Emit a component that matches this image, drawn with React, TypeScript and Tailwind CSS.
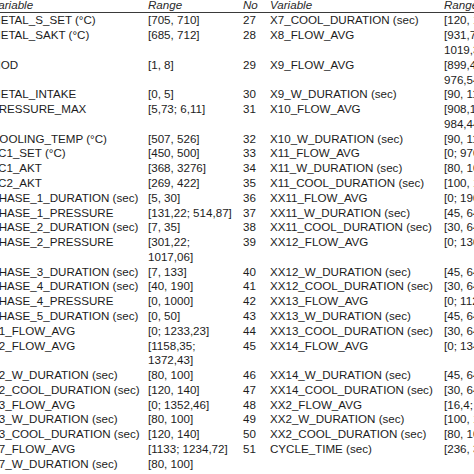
import React from "react";

type Row = { lv: string; lr: string[]; no?: string; rv?: string; rr?: string[] };

const rows: Row[] = [
  { lv: "METAL_S_SET (°C)", lr: ["[705, 710]"], no: "27", rv: "X7_COOL_DURATION (sec)", rr: ["[120, 140]"] },
  { lv: "METAL_SAKT (°C)", lr: ["[685, 712]"], no: "28", rv: "X8_FLOW_AVG", rr: ["[931,72;", "1019,35]"] },
  { lv: "MOD", lr: ["[1, 8]"], no: "29", rv: "X9_FLOW_AVG", rr: ["[899,45;", "976,54]"] },
  { lv: "METAL_INTAKE", lr: ["[0, 5]"], no: "30", rv: "X9_W_DURATION (sec)", rr: ["[90, 110]"] },
  { lv: "PRESSURE_MAX", lr: ["[5,73; 6,11]"], no: "31", rv: "X10_FLOW_AVG", rr: ["[908,15;", "984,44]"] },
  { lv: "COOLING_TEMP (°C)", lr: ["[507, 526]"], no: "32", rv: "X10_W_DURATION (sec)", rr: ["[90, 110]"] },
  { lv: "TC1_SET (°C)", lr: ["[450, 500]"], no: "33", rv: "X11_FLOW_AVG", rr: ["[0; 970,12]"] },
  { lv: "TC1_AKT", lr: ["[368, 3276]"], no: "34", rv: "X11_W_DURATION (sec)", rr: ["[80, 100]"] },
  { lv: "TC2_AKT", lr: ["[269, 422]"], no: "35", rv: "X11_COOL_DURATION (sec)", rr: ["[100, 120]"] },
  { lv: "PHASE_1_DURATION (sec)", lr: ["[5, 30]"], no: "36", rv: "XX11_FLOW_AVG", rr: ["[0; 190,45]"] },
  { lv: "PHASE_1_PRESSURE", lr: ["[131,22; 514,87]"], no: "37", rv: "XX11_W_DURATION (sec)", rr: ["[45, 64]"] },
  { lv: "PHASE_2_DURATION (sec)", lr: ["[7, 35]"], no: "38", rv: "XX11_COOL_DURATION (sec)", rr: ["[30, 64]"] },
  { lv: "PHASE_2_PRESSURE", lr: ["[301,22;", "1017,06]"], no: "39", rv: "XX12_FLOW_AVG", rr: ["[0; 130,21]"] },
  { lv: "PHASE_3_DURATION (sec)", lr: ["[7, 133]"], no: "40", rv: "XX12_W_DURATION (sec)", rr: ["[45, 64]"] },
  { lv: "PHASE_4_DURATION (sec)", lr: ["[40, 190]"], no: "41", rv: "XX12_COOL_DURATION (sec)", rr: ["[30, 64]"] },
  { lv: "PHASE_4_PRESSURE", lr: ["[0, 1000]"], no: "42", rv: "XX13_FLOW_AVG", rr: ["[0; 112,36]"] },
  { lv: "PHASE_5_DURATION (sec)", lr: ["[0, 50]"], no: "43", rv: "XX13_W_DURATION (sec)", rr: ["[45, 64]"] },
  { lv: "X1_FLOW_AVG", lr: ["[0; 1233,23]"], no: "44", rv: "XX13_COOL_DURATION (sec)", rr: ["[30, 64]"] },
  { lv: "X2_FLOW_AVG", lr: ["[1158,35;", "1372,43]"], no: "45", rv: "XX14_FLOW_AVG", rr: ["[0; 134,09]"] },
  { lv: "X2_W_DURATION (sec)", lr: ["[80, 100]"], no: "46", rv: "XX14_W_DURATION (sec)", rr: ["[45, 64]"] },
  { lv: "X2_COOL_DURATION (sec)", lr: ["[120, 140]"], no: "47", rv: "XX14_COOL_DURATION (sec)", rr: ["[30, 64]"] },
  { lv: "X3_FLOW_AVG", lr: ["[0; 1352,46]"], no: "48", rv: "XX2_FLOW_AVG", rr: ["[16,4; 39,2]"] },
  { lv: "X3_W_DURATION (sec)", lr: ["[80, 100]"], no: "49", rv: "XX2_W_DURATION (sec)", rr: ["[100, 120]"] },
  { lv: "X3_COOL_DURATION (sec)", lr: ["[120, 140]"], no: "50", rv: "XX2_COOL_DURATION (sec)", rr: ["[80, 100]"] },
  { lv: "X7_FLOW_AVG", lr: ["[1133; 1234,72]"], no: "51", rv: "CYCLE_TIME (sec)", rr: ["[236, 310]"] },
  { lv: "X7_W_DURATION (sec)", lr: ["[80, 100]"] },
];

const Lines = ({ items }: { items?: string[] }) => (
  <div className="flex flex-col">
    {(items ?? []).map((t, i) => (
      <span key={i}>{t}</span>
    ))}
  </div>
);

export default function App() {
  return (
    <div className="w-[474px] h-[474px] overflow-hidden bg-white">
      <div
        className="-ml-[9px] -mt-[2.4px] w-[620px] text-[11.6px] leading-[14.78px] text-[#1c1c1c] whitespace-nowrap"
        style={{ fontFamily: '"Liberation Sans", Arial, sans-serif' }}
      >
        <div className="grid grid-cols-[157px_95px_27px_174px_167px] border-b-[1.3px] border-[#3a3a3a] italic text-[#2a2a2a]">
          <span>Variable</span>
          <span>Range</span>
          <span>No</span>
          <span>Variable</span>
          <span>Range</span>
        </div>
        {rows.map((r, i) => (
          <div key={i} className="grid grid-cols-[157px_95px_27px_174px_167px]">
            <span>{r.lv}</span>
            <Lines items={r.lr} />
            <span>{r.no ?? ""}</span>
            <span>{r.rv ?? ""}</span>
            <Lines items={r.rr} />
          </div>
        ))}
      </div>
    </div>
  );
}
